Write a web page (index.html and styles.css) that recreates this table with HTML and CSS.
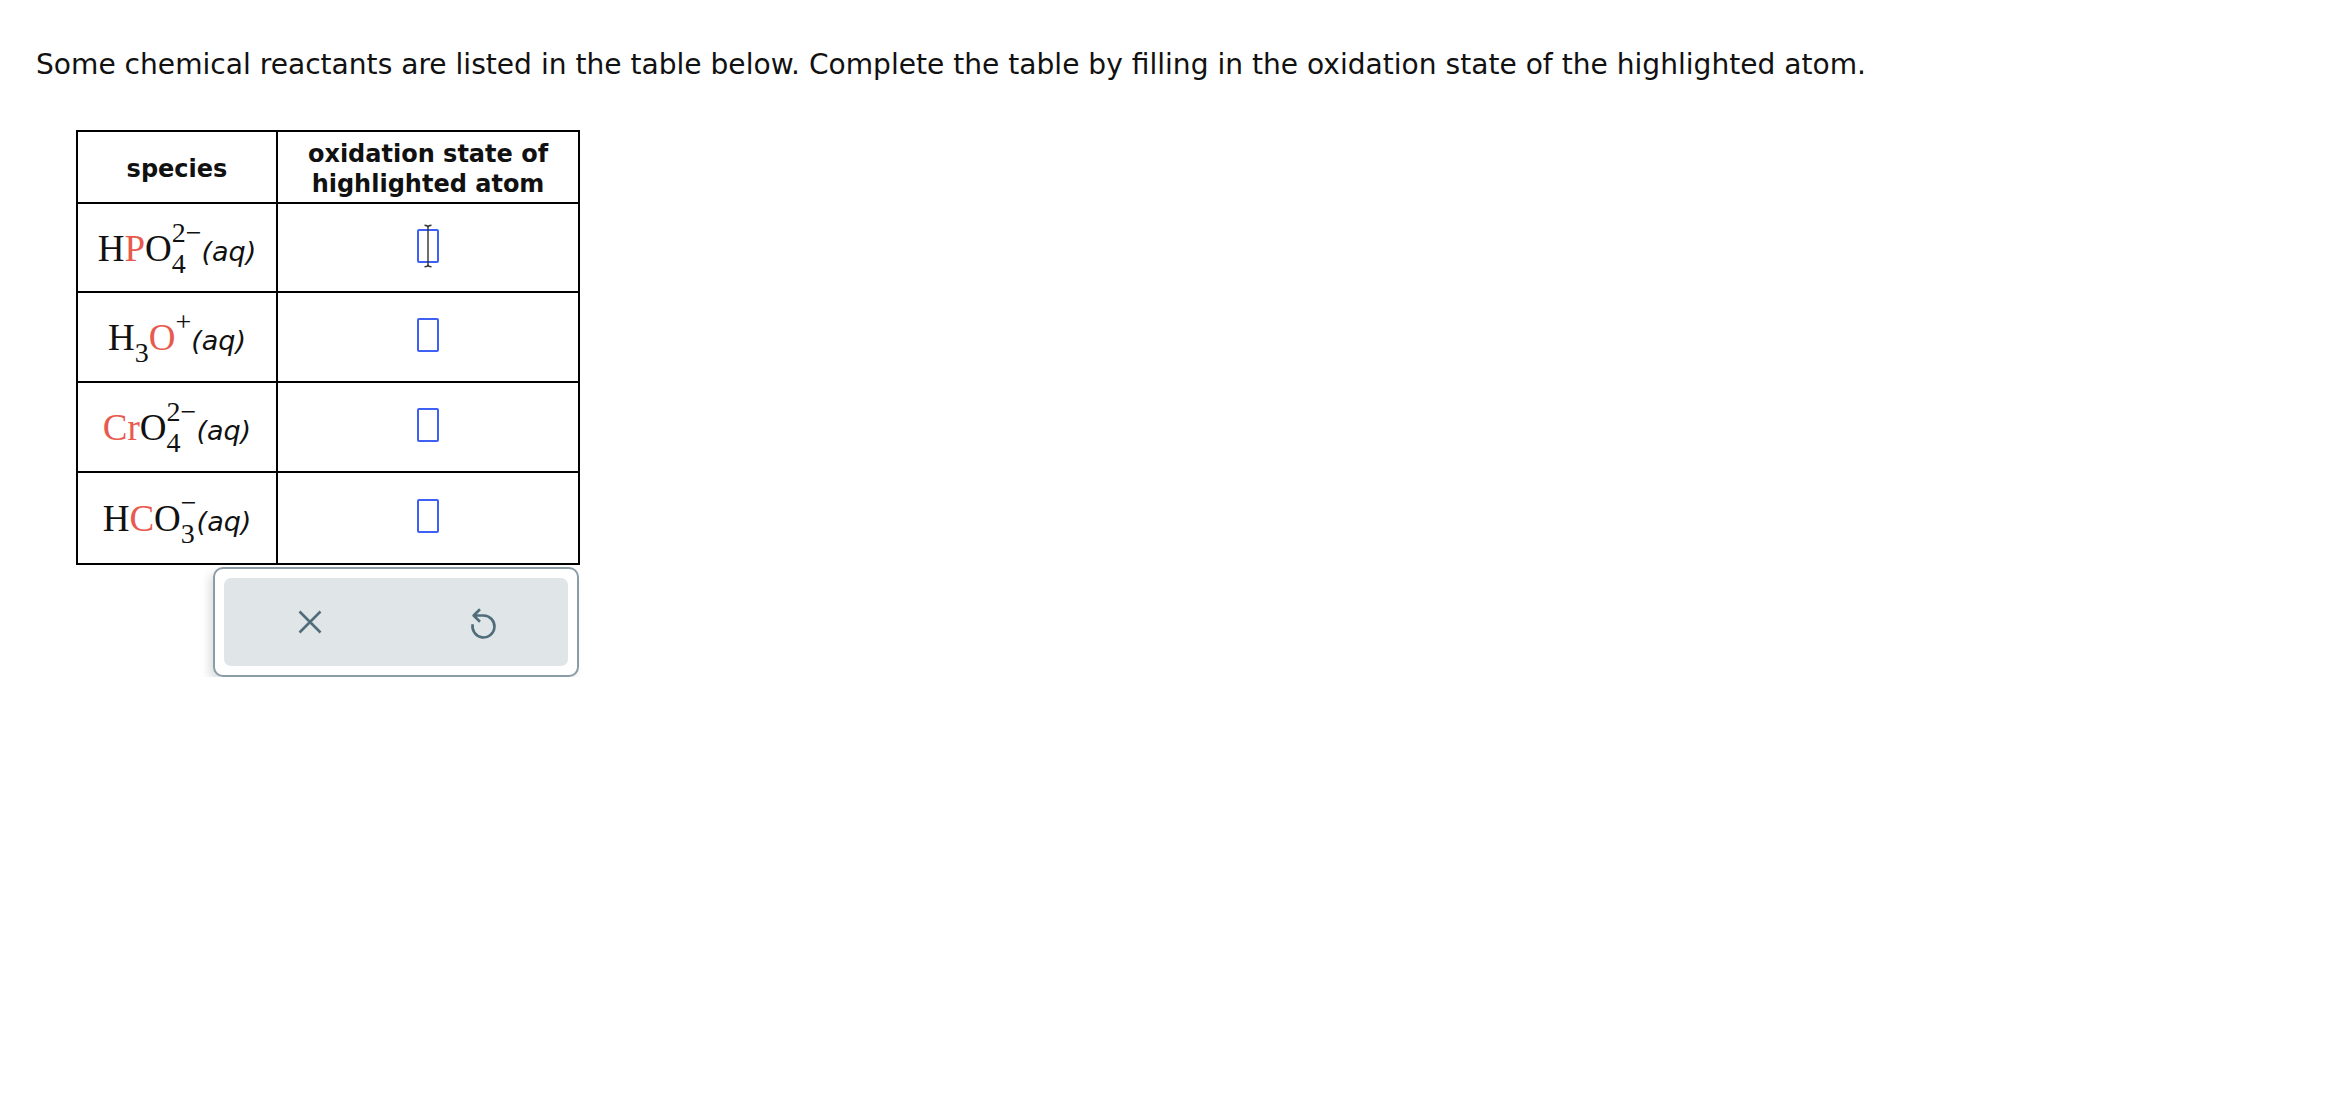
FILE: index.html
```html
<!DOCTYPE html>
<html lang="en">
<head>
<meta charset="utf-8">
<title>Oxidation states</title>
<link rel="stylesheet" href="styles.css">
</head>
<body>
<main class="page">
  <p class="prompt">Some chemical reactants are listed in the table below. Complete the table by filling in the oxidation state of the highlighted atom.</p>
  <div class="widget">
    <div class="qtable">
      <div class="cell head">species</div>
      <div class="cell head">oxidation state of<br>highlighted atom</div>

      <div class="cell formula"><span class="f">H<span class="hl">P</span>O<span class="ss"><span>2−</span><span>4</span></span><span class="aq">(aq)</span></span></div>
      <div class="cell answer"><span class="box focused"><svg class="ibeam" width="10" height="44" viewBox="0 0 10 44"><path d="M1.5 1.2 Q5 1.2 5 3.5 Q5 1.2 8.5 1.2 M5 3.5 V40.5 M1.5 42.8 Q5 42.8 5 40.5 Q5 42.8 8.5 42.8" fill="none" stroke="#333" stroke-width="1.4"/></svg></span></div>

      <div class="cell formula"><span class="f">H<span class="sub1">3</span><span class="hl">O</span><span class="sup1">+</span><span class="aq">(aq)</span></span></div>
      <div class="cell answer"><span class="box"></span></div>

      <div class="cell formula"><span class="f"><span class="hl">Cr</span>O<span class="ss"><span>2−</span><span>4</span></span><span class="aq">(aq)</span></span></div>
      <div class="cell answer"><span class="box"></span></div>

      <div class="cell formula"><span class="f">H<span class="hl">C</span>O<span class="ss"><span>−</span><span>3</span></span><span class="aq">(aq)</span></span></div>
      <div class="cell answer"><span class="box"></span></div>
    </div>
    <div class="toolbar">
      <div class="toolbar-inner">
        <button class="tool" type="button" aria-label="Clear">
          <svg width="26" height="26" viewBox="0 0 26 26"><path d="M2.5 2.5 L23.5 23.5 M23.5 2.5 L2.5 23.5" stroke="#4f6d7a" stroke-width="2.6" fill="none"/></svg>
        </button>
        <button class="tool" type="button" aria-label="Undo">
          <svg width="30" height="36" viewBox="466 604 30 36"><path d="M479 609.2 L472.6 615.5 L479 621.8 M472.6 615.5 H482.5 A11 11 0 1 1 471.7 624.3" stroke="#4f6d7a" stroke-width="2.6" fill="none" stroke-linejoin="round"/></svg>
        </button>
      </div>
    </div>
  </div>
</main>
</body>
</html>
```

FILE: styles.css
```css
html, body {
  margin: 0;
  padding: 0;
  background: #ffffff;
}

.page {
  padding: 47px 0 0 36px;
  font-family: "DejaVu Sans", Verdana, sans-serif;
  color: #111;
}

.prompt {
  margin: 0;
  font-size: 28.1px;
  line-height: 36px;
  white-space: nowrap;
}

.widget {
  margin: 47px 0 0 40px;
  width: 504px;
}

.qtable {
  display: grid;
  grid-template-columns: 200px 302px;
  grid-template-rows: 72px 89px 90px 90px 92px;
  border-left: 2px solid #000;
  border-top: 2px solid #000;
  width: 502px;
}

.cell {
  box-sizing: border-box;
  border-right: 2px solid #000;
  border-bottom: 2px solid #000;
  display: flex;
  align-items: center;
  justify-content: center;
}

.head {
  font-weight: bold;
  font-size: 24px;
  line-height: 30px;
  text-align: center;
  color: #111;
  padding-top: 3px;
}

.f {
  font-family: "Liberation Serif", "Times New Roman", serif;
  font-size: 37px;
  line-height: 42px;
  color: #111;
  white-space: nowrap;
}

.hl {
  color: #e95a4e;
}

.ss {
  display: inline-block;
  vertical-align: -12px;
  font-size: 28px;
  text-align: left;
}

.ss > span {
  display: block;
  height: 31px;
  line-height: 31px;
}

.sub1,
.sup1 {
  display: inline-block;
  font-size: 28px;
  line-height: 31px;
  height: 31px;
}

.sub1 {
  vertical-align: -12px;
}

.sup1 {
  vertical-align: 19px;
}

.aq {
  font-family: "DejaVu Sans", Verdana, sans-serif;
  font-style: italic;
  font-size: 27px;
}

.box {
  position: relative;
  display: inline-block;
  box-sizing: border-box;
  width: 22px;
  height: 34px;
  border: 2.5px solid #3f60f5;
  border-radius: 2px;
  margin-bottom: 4px;
}

.ibeam {
  position: absolute;
  left: 3.5px;
  top: -6.5px;
}

.toolbar {
  box-sizing: border-box;
  margin: 2px 0 0 137px;
  width: 366px;
  height: 110px;
  border: 2px solid #8a9da6;
  border-radius: 10px;
  padding: 9px;
  background: #fff;
  box-shadow: -4px 5px 10px rgba(0, 0, 0, 0.13);
}

.toolbar-inner {
  height: 100%;
  background: #e0e5e8;
  border-radius: 7px;
  display: grid;
  grid-template-columns: 1fr 1fr;
}

.tool {
  border: 0;
  background: transparent;
  padding: 0;
  display: flex;
  align-items: center;
  justify-content: center;
}

.tool svg {
  display: block;
}
```
